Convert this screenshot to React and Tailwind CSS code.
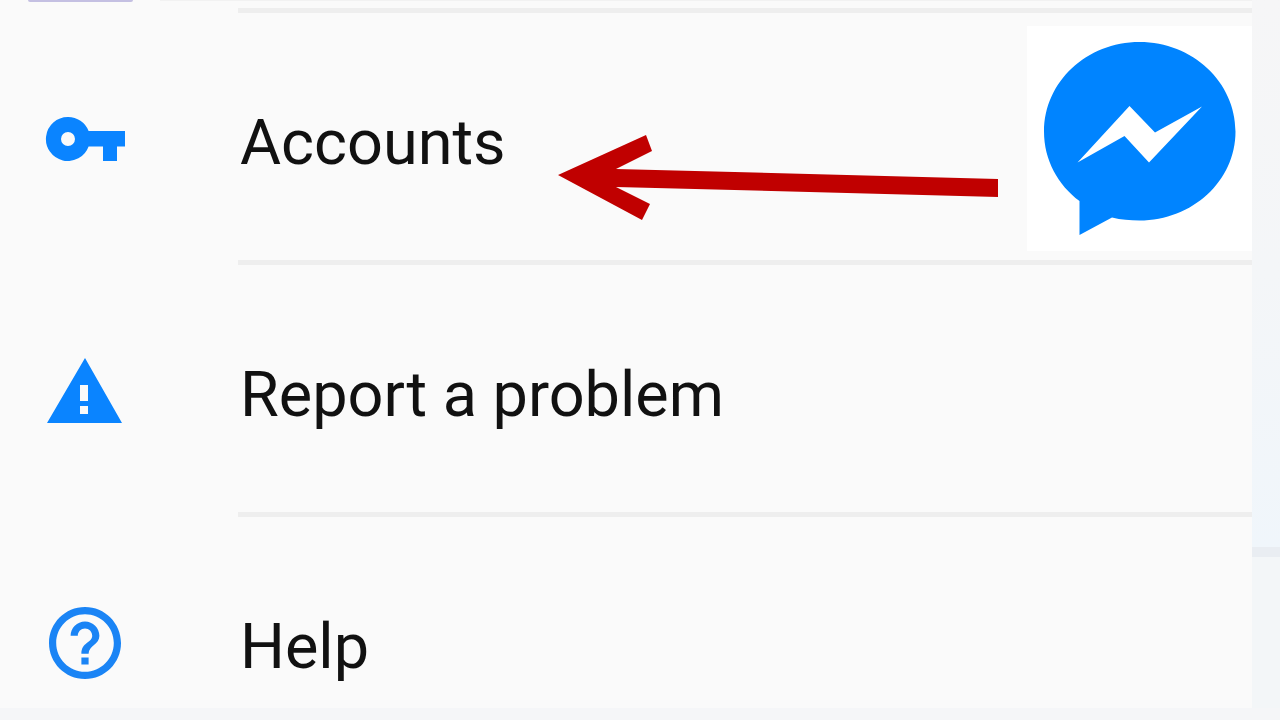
function KeyIcon() {
  return (
    <svg className="h-[44px] w-[80px]" viewBox="0 0 80 44" fill="#0a84ff" fillRule="evenodd" aria-hidden="true">
      <path d="M23 0A22 22 0 1 0 43.600 29.500H58V44H72V29.500H80V14H43.600A22 22 0 0 0 23 0ZM23 15A7 7 0 1 1 23 29A7 7 0 1 1 23 15Z" />
    </svg>
  );
}

function WarningIcon() {
  return (
    <svg className="h-[66px] w-[76px]" viewBox="0 0 76 66" fill="#0a84ff" fillRule="evenodd" aria-hidden="true">
      <path d="M38 0L75 65H0ZM33 27V43H41V27ZM33 48V56H41V48Z" />
    </svg>
  );
}

function HelpIcon() {
  return (
    <svg className="size-[72px]" viewBox="2 2 20 20" fill="#1a84f5" aria-hidden="true">
      <path d="M11 18h2v-2h-2v2zm1-16C6.480 2 2 6.480 2 12s4.480 10 10 10 10-4.480 10-10S17.520 2 12 2zm0 18c-4.410 0-8-3.590-8-8s3.590-8 8-8 8 3.590 8 8-3.590 8-8 8zm0-14c-2.210 0-4 1.790-4 4h2c0-1.100.9-2 2-2s2 .9 2 2c0 2-3 1.750-3 5h2c0-2.250 3-2.500 3-5 0-2.210-1.790-4-4-4z" />
    </svg>
  );
}

function MessengerLogo() {
  return (
    <svg className="size-[225px]" viewBox="0 0 225 225" role="img" aria-label="Messenger">
      <path
        fill="#0084ff"
        d="M112.500 16C59.500 16 17 56 17 105.500C17 134 31 159 52.500 175V209L85 191.500C94 193.700 103 194.500 112.500 194.500C165.500 194.500 208.500 154.800 208.500 105.500C208.500 56 165.500 16 112.500 16Z"
      />
      <path fill="#fff" d="M50.500 136.500L102.500 80L128 106.500L175 80.500L122 136.500L97.500 110Z" />
    </svg>
  );
}

function Arrow() {
  return (
    <svg className="h-[88px] w-[440px]" viewBox="0 0 440 88" fill="#c00000" aria-hidden="true">
      <path d="M0 41L88 1L94 17L58 35L440 45V63L58 53L92 70L84 86Z" />
    </svg>
  );
}

const items = [
  { label: "Accounts", Icon: KeyIcon },
  { label: "Report a problem", Icon: WarningIcon },
  { label: "Help", Icon: HelpIcon },
];

export default function App() {
  return (
    <div className="relative flex min-h-screen bg-[#f5f6f8] pb-3 font-[Roboto,'Liberation_Sans',sans-serif]">
      <main className="relative min-w-0 flex-1 bg-[#fafafa] pt-2">
        <div className="absolute top-0 left-7 h-0.5 w-[105px] rounded-b-full bg-[#c4c0e2]" />
        <div className="absolute top-0 right-0 left-40 h-px bg-[#f2f2f2]" />
        <nav aria-label="Settings">
          <ul>
            {items.map(({ label, Icon }) => (
              <li key={label} className="group">
                <a href="#" className="flex text-[63px] leading-[80px] text-[#111]">
                  <span className="flex w-[238px] shrink-0 items-start pt-[91px] pr-[68px]">
                    <span className="flex h-[80px] w-full items-center justify-center">
                      <Icon />
                    </span>
                  </span>
                  <span className="flex-1 border-t-5 border-[#eeeeee] pt-[90px] pb-[77px] pl-0.5 whitespace-nowrap group-last:pb-[21px]">
                    {label}
                  </span>
                </a>
              </li>
            ))}
          </ul>
        </nav>
        <div className="absolute top-[134px] right-[254px]">
          <Arrow />
        </div>
        <div className="absolute top-[26px] right-0 bg-white">
          <MessengerLogo />
        </div>
      </main>
      <aside className="flex w-7 shrink-0 flex-col">
        <div className="h-[547px] bg-linear-to-b from-[#f6f6f7] via-[#f4f6f8] to-[#f0f6fb]" />
        <div className="h-[10px] bg-[#e9edf2]" />
        <div className="flex-1 bg-[#f3f6f8]" />
      </aside>
    </div>
  );
}
